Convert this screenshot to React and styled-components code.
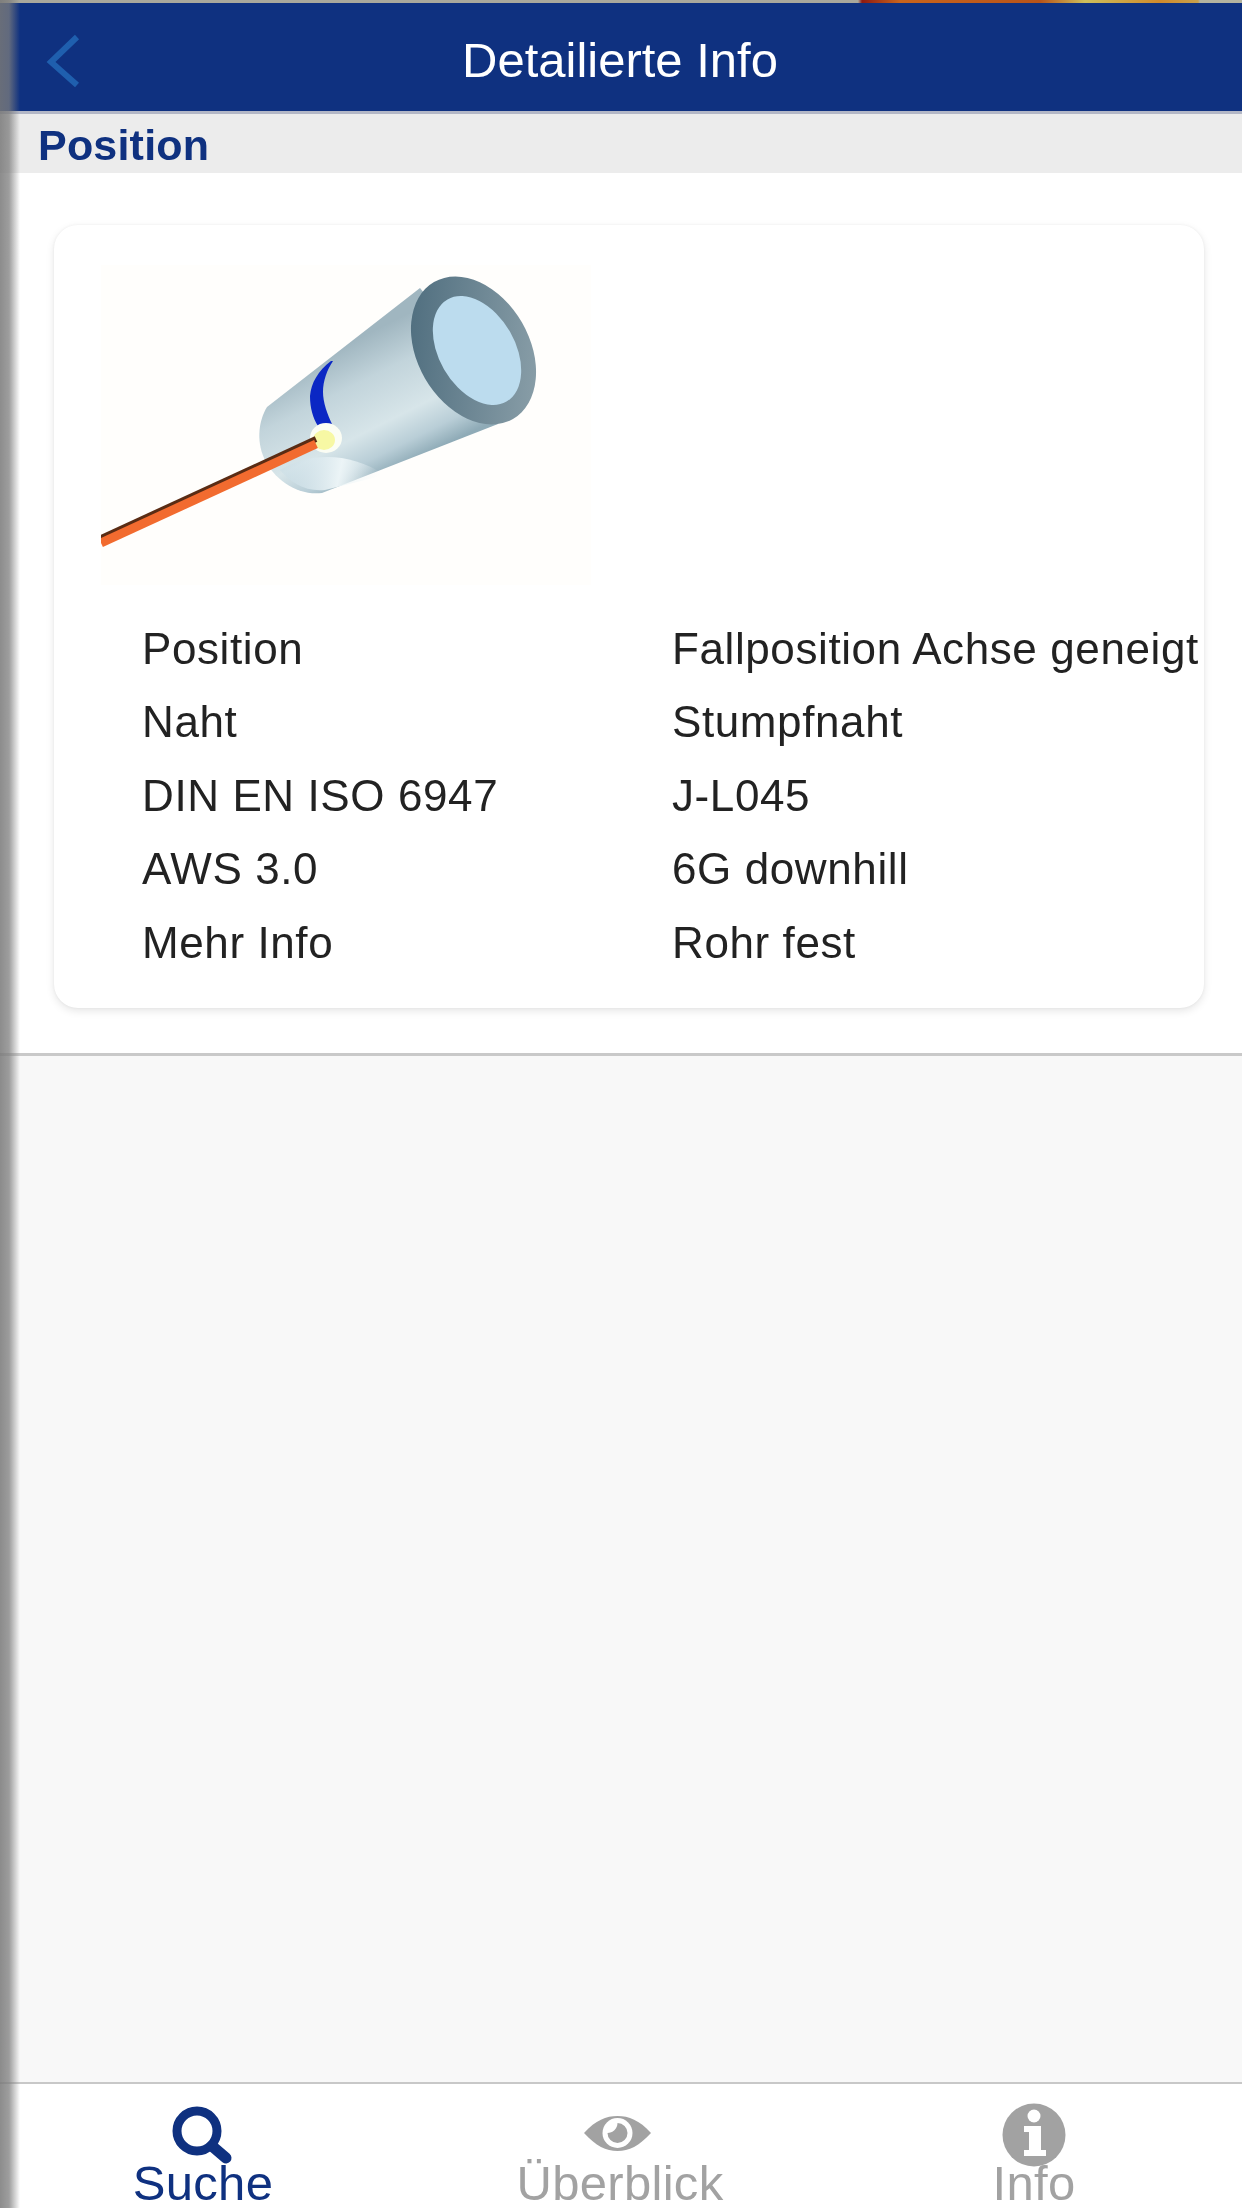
import React from 'react';
import styled, { createGlobalStyle } from 'styled-components';

const GlobalStyle = createGlobalStyle`
  html, body {
    margin: 0;
    padding: 0;
    background: #f8f8f8;
  }
  body {
    font-family: "Liberation Sans", Arial, sans-serif;
  }
`;

const Page = styled.div`
  position: relative;
  display: flex;
  flex-direction: column;
  width: 1242px;
  height: 2208px;
  overflow: hidden;
  background: #f8f8f8;
  filter: blur(0.7px);
`;

// shadow of the screen lying underneath, along the left edge
const EdgeShadow = styled.div`
  position: absolute;
  top: 0;
  bottom: 0;
  left: 0;
  width: 20px;
  background: linear-gradient(to right, rgba(120, 120, 120, 0.85) 0, rgba(125, 125, 125, 0.75) 9px, rgba(150, 150, 150, 0) 20px);
`;

const TopStrip = styled.div`
  flex: none;
  height: 3px;
  background: linear-gradient(to right, #a9a89c 0, #a9a89c 858px, #8e1a12 862px, #c9641c 900px, #b8541a 1040px, #cdbf5c 1085px, #d08a2c 1160px, #c8a14c 1198px, #b4b4a0 1200px);
`;

const Header = styled.header`
  flex: none;
  display: flex;
  align-items: center;
  justify-content: center;
  position: relative;
  box-sizing: content-box;
  height: 108px;
  border-bottom: 3px solid #b3b7c6;
  background: #0f3180;
  color: #fff;
`;

const HeaderTitle = styled.h1`
  margin: 6px 2px 0 0;
  font-size: 49px;
  font-weight: 400;
`;

const BackButton = styled.button`
  position: absolute;
  top: 30px;
  left: 42px;
  display: block;
  width: 42px;
  height: 56px;
  padding: 0;
  border: none;
  background: none;
`;

const SectionBar = styled.div`
  flex: none;
  height: 59px;
  padding-left: 38px;
  background: #ececec;
  color: #0f3180;
  font-size: 43px;
  font-weight: 700;
  letter-spacing: 0.2px;
  line-height: 62px;
`;

const Content = styled.main`
  flex: none;
  height: 883px;
  padding: 52px 38px 0 54px;
  box-sizing: border-box;
  border-bottom: 3px solid #c9c9c9;
  background: #fff;
`;

const Card = styled.section`
  height: 783px;
  padding: 40px 0 0 47px;
  box-sizing: border-box;
  border-radius: 24px;
  background: #fff;
  box-shadow: 0 3px 8px rgba(0, 0, 0, 0.1), 0 0 3px rgba(0, 0, 0, 0.05);
`;

const Illustration = styled.svg`
  display: block;
  width: 490px;
  height: 320px;
`;

const InfoTable = styled.dl`
  display: grid;
  grid-template-columns: 530px 1fr;
  grid-auto-rows: 73.5px;
  align-items: center;
  margin: 27px 0 0 41px;
  color: #222;
  font-size: 44px;
  letter-spacing: 0.6px;
`;

const Term = styled.dt`
  margin: 0;
  white-space: nowrap;
`;

const Value = styled.dd`
  margin: 0;
  white-space: nowrap;
`;

const Filler = styled.div`
  flex: 1;
`;

const TabBar = styled.nav`
  flex: none;
  display: grid;
  grid-template-columns: 406px 428px 400px;
  height: 126px;
  border-top: 2px solid #c8c8c8;
  box-sizing: border-box;
  background: #fff;
`;

const Tab = styled.div`
  display: flex;
  flex-direction: column;
  align-items: center;
  color: ${(props) => (props.active ? '#0f3180' : '#a2a2a2')};
`;

const TabIcon = styled.svg`
  display: block;
  flex: none;
  width: 90px;
  height: 66px;
  margin-top: 18px;
`;

const TabLabel = styled.span`
  margin-top: -5px;
  font-size: 49px;
  letter-spacing: 0.3px;
  line-height: 40px;
  white-space: nowrap;
`;

const rows = [
  ['Position', 'Fallposition Achse geneigt'],
  ['Naht', 'Stumpfnaht'],
  ['DIN EN ISO 6947', 'J-L045'],
  ['AWS 3.0', '6G downhill'],
  ['Mehr Info', 'Rohr fest'],
];

// drawn in page coordinates, the viewBox is where the picture sits on the page
const TubeDrawing = () => (
  <Illustration viewBox="101 265 490 320">
    <defs>
      <linearGradient id="tube" gradientUnits="userSpaceOnUse" x1="345" y1="345" x2="405" y2="465">
        <stop offset="0" stopColor="#a0b6c0" />
        <stop offset="0.3" stopColor="#c2d4db" />
        <stop offset="0.65" stopColor="#d7e5e9" />
        <stop offset="0.85" stopColor="#b9ced7" />
        <stop offset="1" stopColor="#8fabb7" />
      </linearGradient>
      <linearGradient id="rim" gradientUnits="userSpaceOnUse" x1="410" y1="310" x2="540" y2="400">
        <stop offset="0" stopColor="#4d6c7d" />
        <stop offset="1" stopColor="#8fa3ac" />
      </linearGradient>
      <linearGradient id="glow" gradientUnits="userSpaceOnUse" x1="285" y1="450" x2="380" y2="470">
        <stop offset="0" stopColor="#c6dbe5" stopOpacity="0.4" />
        <stop offset="0.6" stopColor="#eef6f8" stopOpacity="0.95" />
        <stop offset="1" stopColor="#eef6f8" stopOpacity="0" />
      </linearGradient>
    </defs>
    <rect x="101" y="265" width="490" height="320" fill="#fffefc" />
    <path
      d="M420 288 L267 407 C259 420 256 440 264 458 C274 480 298 496 322 493 L498 424 L470 350 Z"
      fill="url(#tube)"
    />
    <path d="M280 470 C310 452 350 452 385 475 L325 490 C305 492 290 482 280 470 Z" fill="url(#glow)" />
    <path
      d="M331 361 C318 371 311 383 310 396 C310 408 313 418 318 426 L333 426 C327 414 323 402 323 392 C323 381 327 370 333 361 Z"
      fill="#0b27c4"
    />
    <ellipse cx="326" cy="438" rx="16" ry="15" fill="#fbfdf4" />
    <ellipse cx="324" cy="440" rx="11" ry="10" fill="#f7f8a4" />
    <ellipse
      cx="473.5"
      cy="350.5"
      rx="56"
      ry="79"
      transform="rotate(-30 473.5 350.5)"
      fill="url(#rim)"
    />
    <ellipse
      cx="477"
      cy="350.5"
      rx="38"
      ry="59"
      transform="rotate(-30 477 350.5)"
      fill="#bcdcee"
    />
    <line x1="101" y1="538" x2="316" y2="439" stroke="#5a2c14" strokeWidth="6" />
    <line x1="101" y1="543" x2="316" y2="444" stroke="#f26b2f" strokeWidth="9" />
  </Illustration>
);

const BackIcon = () => (
  <BackButton aria-label="Zurück">
    <svg width="42" height="56" viewBox="0 0 42 56" fill="none">
      <path d="M35 4 L9 29 L35 52" stroke="#1f5fae" strokeWidth="6" />
    </svg>
  </BackButton>
);

const SearchIcon = () => (
  <TabIcon viewBox="0 0 90 66" fill="none">
    <circle cx="39" cy="29" r="20" stroke="currentColor" strokeWidth="9" />
    <line x1="54" y1="44" x2="68" y2="56" stroke="currentColor" strokeWidth="11" strokeLinecap="round" />
  </TabIcon>
);

const EyeIcon = () => (
  <TabIcon viewBox="0 0 90 66" fill="none">
    <path d="M9 31 C21 18 31 14 42.5 14 C54 14 64 18 76 31 C64 44 54 49 42.5 49 C31 49 21 44 9 31 Z" fill="currentColor" />
    <circle cx="42.5" cy="31" r="15" fill="#fff" />
    <path d="M42.5 21 A10 10 0 1 1 32.5 31 C37.5 31 42.5 27 42.5 21 Z" fill="currentColor" />
  </TabIcon>
);

const InfoIcon = () => (
  <TabIcon viewBox="0 0 90 66" fill="none">
    <circle cx="45" cy="33" r="31.5" fill="currentColor" />
    <circle cx="45" cy="14" r="6.5" fill="#fff" />
    <path d="M35 24 H52 V48 H57 V54 H35 V48 H40 V30 H35 Z" fill="#fff" />
  </TabIcon>
);

const App = () => (
  <Page>
    <GlobalStyle />
    <TopStrip />
    <Header>
      <BackIcon />
      <HeaderTitle>Detailierte Info</HeaderTitle>
    </Header>
    <SectionBar>Position</SectionBar>
    <Content>
      <Card>
        <TubeDrawing />
        <InfoTable>
          {rows.map(([term, value]) => (
            <React.Fragment key={term}>
              <Term>{term}</Term>
              <Value>{value}</Value>
            </React.Fragment>
          ))}
        </InfoTable>
      </Card>
    </Content>
    <Filler />
    <TabBar>
      <Tab active>
        <SearchIcon />
        <TabLabel>Suche</TabLabel>
      </Tab>
      <Tab>
        <EyeIcon />
        <TabLabel>Überblick</TabLabel>
      </Tab>
      <Tab>
        <InfoIcon />
        <TabLabel>Info</TabLabel>
      </Tab>
    </TabBar>
    <EdgeShadow />
  </Page>
);

export default App;
